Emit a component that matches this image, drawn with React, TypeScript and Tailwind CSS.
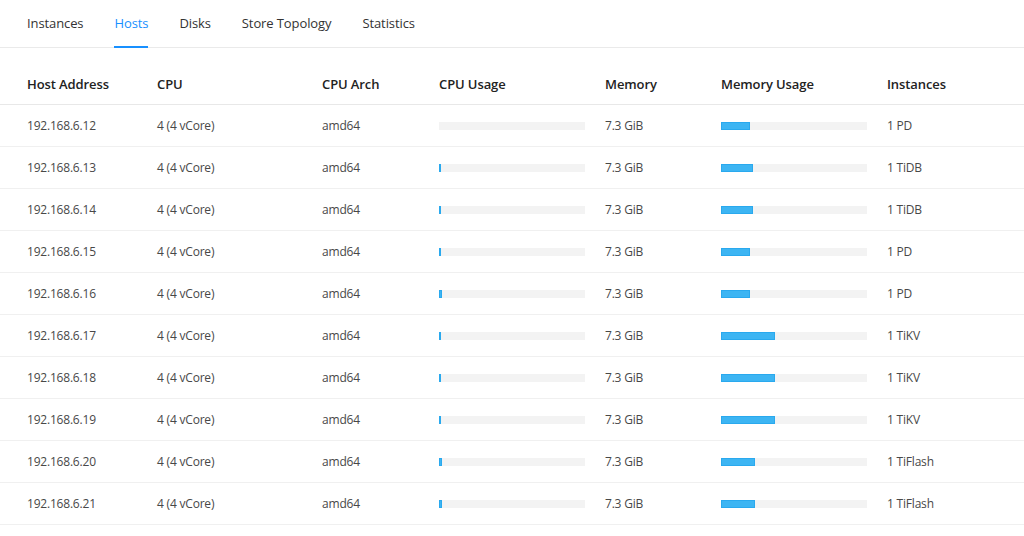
import { useState } from 'react';

type Host = {
  address: string;
  cpuUsage: number;
  memUsage: number;
  instances: string;
};

const TABS = ['Instances', 'Hosts', 'Disks', 'Store Topology', 'Statistics'];

const HOSTS: Host[] = [
  { address: '192.168.6.12', cpuUsage: 0, memUsage: 29, instances: '1 PD' },
  { address: '192.168.6.13', cpuUsage: 2, memUsage: 32, instances: '1 TiDB' },
  { address: '192.168.6.14', cpuUsage: 2, memUsage: 32, instances: '1 TiDB' },
  { address: '192.168.6.15', cpuUsage: 2, memUsage: 29, instances: '1 PD' },
  { address: '192.168.6.16', cpuUsage: 2.5, memUsage: 29, instances: '1 PD' },
  { address: '192.168.6.17', cpuUsage: 2, memUsage: 54, instances: '1 TiKV' },
  { address: '192.168.6.18', cpuUsage: 2, memUsage: 54, instances: '1 TiKV' },
  { address: '192.168.6.19', cpuUsage: 2, memUsage: 54, instances: '1 TiKV' },
  { address: '192.168.6.20', cpuUsage: 3, memUsage: 34, instances: '1 TiFlash' },
  { address: '192.168.6.21', cpuUsage: 3, memUsage: 34, instances: '1 TiFlash' },
];

// column grid shared by header + rows (px widths match the reference)
const COLS = 'grid grid-cols-[130px_165px_117px_166px_116px_166px_1fr]';

function UsageBar({ px }: { px: number }) {
  // px is the filled width out of a 146px track
  return (
    <div className="h-2 w-[146px] bg-[#f3f3f3]">
      {px > 0 && (
        <div
          className="h-full bg-[#3db5f3] border border-[#2aa9ee]"
          style={{ width: px }}
        />
      )}
    </div>
  );
}

export default function App() {
  const [active, setActive] = useState('Hosts');

  return (
    <div className="w-[1024px] h-[536px] overflow-hidden bg-white font-['Open_Sans',sans-serif] text-[#333]">
      {/* Tabs */}
      <div className="flex h-12 items-stretch gap-[31px] border-b border-[#eaeaea] pl-[27px]">
        {TABS.map((tab) => (
          <button
            key={tab}
            onClick={() => setActive(tab)}
            className={
              'relative -mb-px pt-[2px] text-[13px] tracking-[-0.1px] ' +
              (active === tab
                ? 'text-[#1890ff] border-b-2 border-[#1890ff]'
                : 'text-[#333] border-b-2 border-transparent')
            }
          >
            {tab}
          </button>
        ))}
      </div>

      {/* Table */}
      <div className="mt-[15px]">
        <div className={`${COLS} h-[42px] items-center border-b border-[#e8e8e8] pl-[27px] pt-[2px] text-[13px] font-semibold tracking-[-0.1px] text-[#222]`}>
          <div>Host Address</div>
          <div>CPU</div>
          <div>CPU Arch</div>
          <div>CPU Usage</div>
          <div>Memory</div>
          <div>Memory Usage</div>
          <div>Instances</div>
        </div>

        {HOSTS.map((h) => (
          <div
            key={h.address}
            className={`${COLS} h-[42px] items-center border-b border-[#f0f0f0] pl-[27px] text-[12px] tracking-[-0.2px] text-[#484848]`}
          >
            <div>{h.address}</div>
            <div>4 (4 vCore)</div>
            <div>amd64</div>
            <div>
              <UsageBar px={h.cpuUsage} />
            </div>
            <div>7.3 GiB</div>
            <div>
              <UsageBar px={h.memUsage} />
            </div>
            <div>{h.instances}</div>
          </div>
        ))}
      </div>
    </div>
  );
}
